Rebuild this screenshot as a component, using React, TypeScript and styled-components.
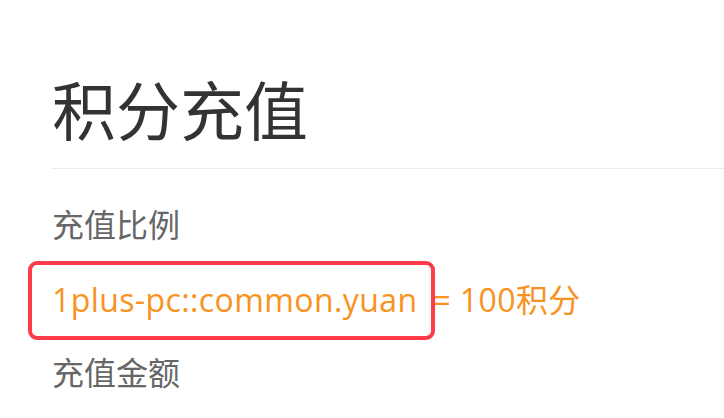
import styled, { createGlobalStyle } from "styled-components";

const GlobalStyle = createGlobalStyle`
  html, body {
    margin: 0;
    padding: 0;
    background: #fff;
  }
  body {
    font-family: "Open Sans", "Noto Sans CJK SC", sans-serif;
    overflow: hidden;
  }
`;

const Page = styled.div`
  padding-left: 52px;
  width: 672px;
  height: 418px;
  overflow: hidden;
`;

const Header = styled.div`
  padding-top: 76px;
  padding-bottom: 22px;
  border-bottom: 1px solid #ececec;
`;

const Title = styled.h1`
  margin: 0;
  font-size: 64px;
  line-height: 70px;
  font-weight: 400;
  color: #333;
`;

const Label = styled.div<{ $top: number }>`
  margin-top: ${(p) => p.$top}px;
  font-size: 32px;
  line-height: 48px;
  color: #666;
`;

const Rate = styled.div`
  margin-top: 27px;
  display: flex;
  align-items: center;
  font-size: 32px;
  line-height: 48px;
  letter-spacing: 0.4px;
  color: #f7931e;
  white-space: nowrap;
`;

const Marked = styled.span`
  position: relative;
`;

// annotation frame drawn over the value
const Highlight = styled.span`
  position: absolute;
  top: -15px;
  bottom: -16px;
  left: -24px;
  right: -18px;
  border: 4px solid #ff3b4a;
  border-radius: 9px;
`;

const Rest = styled.span`
  margin-left: 15px;
`;

export default function App() {
  return (
    <>
      <GlobalStyle />
      <Page>
        <Header>
          <Title>积分充值</Title>
        </Header>
        <Label $top={32}>充值比例</Label>
        <Rate>
          <Marked>
            1plus-pc::common.yuan
            <Highlight />
          </Marked>
          <Rest>= 100积分</Rest>
        </Rate>
        <Label $top={25}>充值金额</Label>
      </Page>
    </>
  );
}
